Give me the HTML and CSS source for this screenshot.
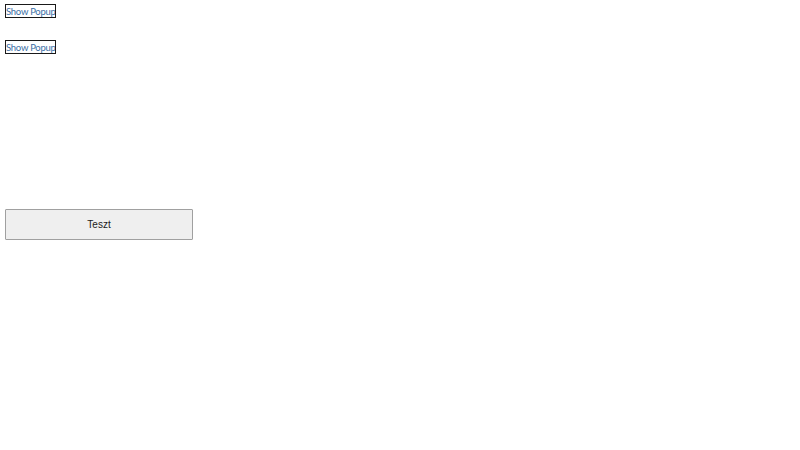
FILE: index.html
```html
<!DOCTYPE html>
<html>
<head>
<meta charset="utf-8">
<link rel="stylesheet" href="styles.css">
</head>
<body>
<div class="page">
  <button class="link-btn">Show Popup</button>
  <button class="link-btn second">Show Popup</button>
  <button class="teszt">Teszt</button>
</div>
</body>
</html>
```
FILE: styles.css
```css
html, body {
  margin: 0;
  padding: 0;
  background: #ffffff;
}
.page {
  display: flex;
  flex-direction: column;
  align-items: flex-start;
  padding: 4px 5px;
}
.link-btn {
  box-sizing: border-box;
  height: 14px;
  width: 51px;
  margin: 0;
  padding: 0;
  border: 1.5px solid #1a1a1a;
  background: #ffffff;
  color: #3a6ea5;
  font-family: Lato, "Open Sans", sans-serif;
  font-size: 9.5px;
  letter-spacing: -0.25px;
  line-height: 11px;
  text-align: left;
  white-space: nowrap;
  overflow: hidden;
}
.second {
  margin-top: 22px;
}
.teszt {
  box-sizing: border-box;
  margin-top: 155px;
  width: 188px;
  height: 31px;
  border: 1px solid #a0a0a0;
  border-radius: 1px;
  background: #efefef;
  color: #1a1a1a;
  font-family: "Liberation Sans", Arial, sans-serif;
  font-size: 10px;
  padding: 0;
}
```
